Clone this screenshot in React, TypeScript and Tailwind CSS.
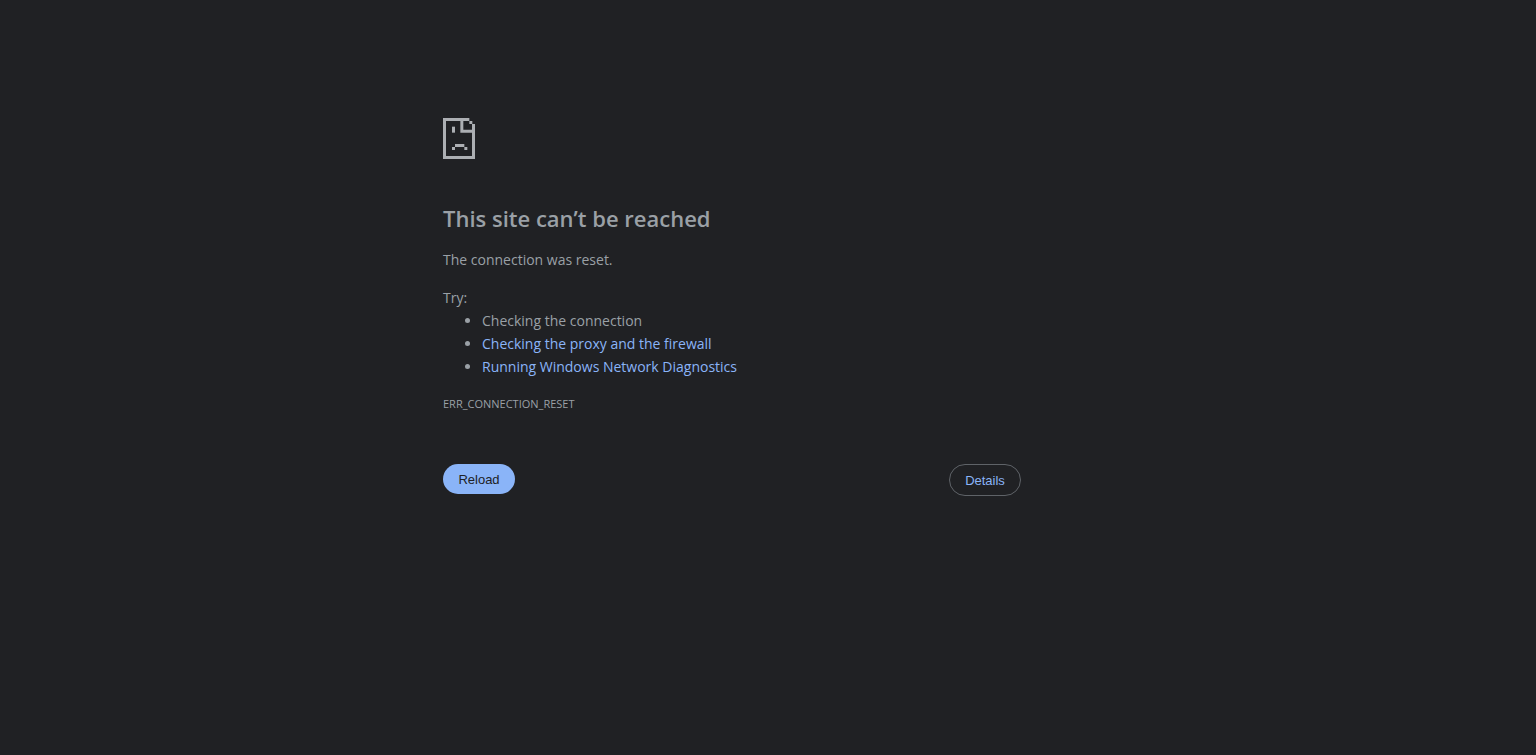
import React from "react";

function SadPageIcon() {
  return (
    <svg
      width="32"
      height="41"
      viewBox="0 0 96 123"
      fill="#acafb3"
      aria-hidden="true"
    >
      <path d="M0 0H79V9H9V114H87V44H52V9H61V35H87V18H96V123H0Z" />
      <path d="M79 9H88V18H79Z" />
      <path d="M27 26H36V44H27Z" />
      <path d="M36 78H64V87H36Z" />
      <path d="M27 87H36V96H27Z" />
      <path d="M64 87H73V96H64Z" />
    </svg>
  );
}

const link = "text-[#8ab4f8]";

export default function App() {
  return (
    <div className="min-h-screen bg-[#202124] px-6 pt-[118px] font-['Open_Sans','Noto_Sans',sans-serif] text-[14px] leading-[23px] text-[#9aa0a6]">
      <main className="mx-auto max-w-[650px] sm:pr-[72px]">
        <SadPageIcon />
        <h1 className="mt-[43px] text-[22px] leading-8 font-semibold">This site can’t be reached</h1>
        <p className="mt-[14px]">The connection was reset.</p>
        <div className="mt-[15px]">
          <p>Try:</p>
          <ul className="list-disc pl-[39px]">
            <li>Checking the connection</li>
            <li>
              <a href="#buttons" className={link}>Checking the proxy and the firewall</a>
            </li>
            <li>
              <a href="#diagnose" className={link}>Running Windows Network Diagnostics</a>
            </li>
          </ul>
        </div>
        <p className="mt-[14px] text-[11px]">ERR_CONNECTION_RESET</p>
        <div
          id="buttons"
          className="mt-[49px] flex items-start justify-between font-['Liberation_Sans',Arial,sans-serif] text-[13px]"
        >
          <button type="button" className="h-[30px] w-[72px] rounded-full bg-[#8ab4f8] text-[#202124]">
            Reload
          </button>
          <button
            type="button"
            className="h-8 w-[72px] rounded-full border border-[#5f6368] text-[#8ab4f8]"
          >
            Details
          </button>
        </div>
      </main>
    </div>
  );
}
